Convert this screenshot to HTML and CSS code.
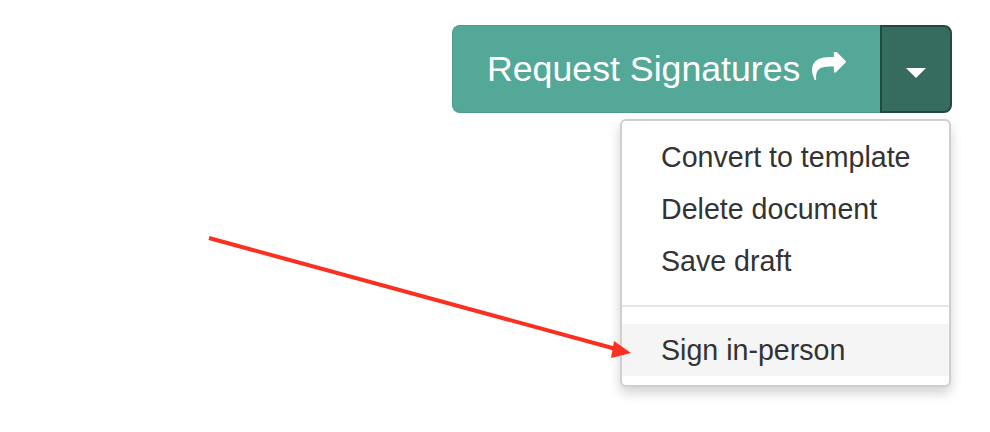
FILE: index.html
```html
<!DOCTYPE html>
<html>
<head>
<meta charset="utf-8">
<link rel="stylesheet" href="styles.css">
</head>
<body>
<div class="page">
  <div class="btn-group">
    <div class="btn-row">
      <button class="btn-main">Request Signatures<svg class="share-icon" viewBox="0 128 1792 1472" width="34" height="28"><path fill="#fff" d="M1792 640q0 26-19 45l-512 512q-19 19-45 19t-45-19-19-45v-256h-224q-98 0-175.5 6t-154 21.5-133 42.5-105.5 69.5-80 101-48.5 138.5-17.5 181q0 55 5 123 0 6 2.5 23.5t2.5 26.5q0 15-8.5 25t-23.5 10q-16 0-28-17-7-9-13-22t-13.5-30-10.5-24q-127-285-127-451 0-199 53-333 162-403 875-403h224v-256q0-26 19-45t45-19 45 19l512 512q19 19 19 45z"/></svg></button>
      <button class="btn-caret"><span class="caret"></span></button>
    </div>
    <ul class="dropdown-menu">
      <li class="item">Convert to template</li>
      <li class="item">Delete document</li>
      <li class="item">Save draft</li>
      <li class="divider"></li>
      <li class="item item-active">Sign in-person</li>
    </ul>
  </div>
  <svg class="annotation" viewBox="0 0 990 432" width="990" height="432">
    <line x1="209" y1="238" x2="616" y2="349" stroke="#fa3020" stroke-width="4"/>
    <polygon points="631,353 614,341 611,358" fill="#fa3020"/>
  </svg>
</div>
</body>
</html>
```
FILE: styles.css
```css
html, body {
  margin: 0;
  padding: 0;
  background: #fff;
}
.page {
  position: relative;
  width: 990px;
  height: 432px;
  box-sizing: border-box;
  padding: 25px 38px 0 0;
  display: flex;
  justify-content: flex-end;
  align-items: flex-start;
  font-family: "Liberation Sans", Arial, sans-serif;
}
.btn-group {
  position: relative;
}
.btn-row {
  display: flex;
}
.btn-main {
  box-sizing: border-box;
  width: 428px;
  height: 88px;
  padding: 0 0 0 34px;
  display: flex;
  align-items: center;
  background: #53a897;
  border: 1px solid #4b9c8b;
  border-right: none;
  border-radius: 8px 0 0 8px;
  color: #fff;
  font-family: "Liberation Sans", Arial, sans-serif;
  font-size: 35.7px;
  cursor: pointer;
}
.share-icon {
  margin-left: 12px;
  margin-top: -6px;
}
.btn-caret {
  box-sizing: border-box;
  width: 72px;
  height: 88px;
  padding: 0;
  display: flex;
  align-items: center;
  justify-content: center;
  background: #356c5f;
  border: 2px solid #23493f;
  border-radius: 0 8px 8px 0;
}
.caret {
  width: 0;
  height: 0;
  margin-top: 7px;
  border-top: 10px solid #fff;
  border-left: 10px solid transparent;
  border-right: 10px solid transparent;
}
.dropdown-menu {
  position: absolute;
  top: 94px;
  right: 1px;
  box-sizing: border-box;
  width: 331px;
  margin: 0;
  padding: 10px 0 9px;
  list-style: none;
  background: #fff;
  border: 2px solid #cfcfcf;
  border-radius: 6px;
  box-shadow: 0 6px 12px rgba(0, 0, 0, 0.175);
}
.item {
  height: 52px;
  line-height: 52px;
  padding: 0 38px 0 39px;
  font-size: 28.6px;
  color: #333;
  white-space: nowrap;
}
.item-active {
  background: #f5f5f5;
}
.divider {
  height: 2px;
  margin: 18px 0 17px;
  background: #e5e5e5;
}
.annotation {
  position: absolute;
  top: 0;
  left: 0;
  pointer-events: none;
}
```
